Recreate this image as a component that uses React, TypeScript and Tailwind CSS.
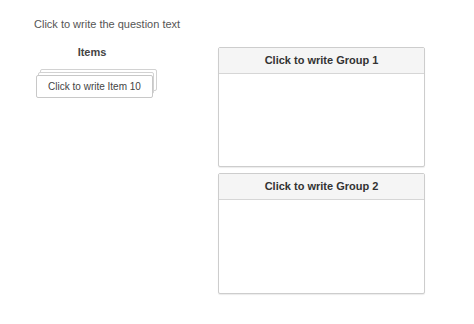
const GROUPS = ["Click to write Group 1", "Click to write Group 2"];

function ItemStack({ label }: { label: string }) {
  return (
    <div className="relative ml-[2px] mt-[10px] h-[29px] w-[122px]">
      <div className="absolute left-[4px] top-0 h-[22px] w-[117px] rounded-[2px] border border-[#d2d2d2] bg-white" />
      <div className="absolute left-[2px] top-[3px] h-[22px] w-[116px] rounded-[2px] border border-[#d2d2d2] bg-white" />
      <div className="absolute left-0 top-[6px] flex h-[23px] w-[117px] items-center justify-center rounded-[2px] border border-[#c8c8c8] bg-white text-[10px] text-[#444]">
        {label}
      </div>
    </div>
  );
}

function GroupBox({ title, height }: { title: string; height: string }) {
  return (
    <div
      className={`flex w-[207px] flex-col rounded-[2px] border border-[#cdcdcd] bg-white shadow-[0_1px_1px_rgba(0,0,0,0.08)] ${height}`}
    >
      <div className="flex h-[26px] items-center justify-center border-b border-[#d6d6d6] bg-[#f5f5f5] text-[11px] font-bold text-[#333]">
        {title}
      </div>
      <div className="flex-1" />
    </div>
  );
}

export default function App() {
  return (
    <div className="h-[324px] w-[474px] bg-white font-['Liberation_Sans',Arial,sans-serif]">
      <div className="pl-[34px] pt-[17px] text-[11px] leading-[14px] text-[#555]">
        Click to write the question text
      </div>
      <div className="mt-[14px] flex">
        <div className="ml-[34px] w-[150px]">
          <div className="w-[116px] text-center text-[11px] font-bold leading-[14px] text-[#444]">
            Items
          </div>
          <ItemStack label="Click to write Item 10" />
        </div>
        <div className="ml-[34px] mt-[2px] flex flex-col gap-[6px]">
          <GroupBox title={GROUPS[0]} height="h-[120px]" />
          <GroupBox title={GROUPS[1]} height="h-[121px]" />
        </div>
      </div>
    </div>
  );
}
